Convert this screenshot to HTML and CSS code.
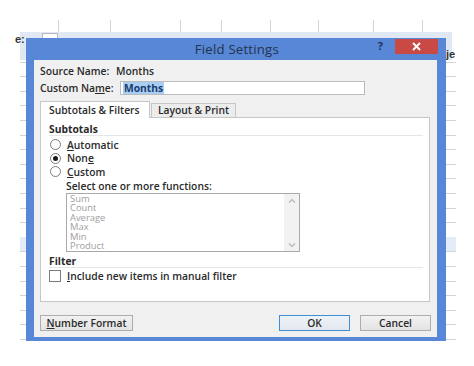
FILE: index.html
```html
<!DOCTYPE html>
<html>
<head>
<meta charset="utf-8">
<link rel="stylesheet" href="styles.css">
</head>
<body>
<div class="sheet">
  <span class="cell-text cell-e">e:</span>
  <span class="cell-box"></span>
  <span class="cell-text cell-je">je</span>

  <div class="dialog">
    <div class="titlebar">
      <span class="title">Field Settings</span>
      <span class="help">?</span>
      <span class="close">
        <svg width="9" height="9" viewBox="0 0 9 9"><path d="M1 1L8 8M8 1L1 8" stroke="#fff" stroke-width="1.8"/></svg>
      </span>
    </div>
    <div class="body">
      <div class="row row-source">
        <span class="label">Source Name:</span>
        <span class="value">Months</span>
      </div>
      <div class="row row-custom">
        <span class="label">Custom Na<u>m</u>e:</span>
        <div class="input"><span class="sel">Months</span></div>
      </div>

      <div class="tabs">
        <div class="tab active">Subtotals &amp; Filters</div>
        <div class="tab">Layout &amp; Print</div>
      </div>
      <div class="panel">
        <div class="section">Subtotals</div>
        <div class="radios">
          <div class="radio-row"><span class="radio"></span><span><u>A</u>utomatic</span></div>
          <div class="radio-row"><span class="radio on"></span><span>Non<u>e</u></span></div>
          <div class="radio-row"><span class="radio"></span><span><u>C</u>ustom</span></div>
        </div>
        <div class="select-label">Select one or more functions:</div>
        <div class="listbox">
          <ul class="items">
            <li>Sum</li>
            <li>Count</li>
            <li>Average</li>
            <li>Max</li>
            <li>Min</li>
            <li>Product</li>
          </ul>
          <div class="scroll">
            <svg width="8" height="5" viewBox="0 0 8 5"><path d="M1 4.5L4 1.5L7 4.5" fill="none" stroke="#b4b4b4" stroke-width="1.1"/></svg>
            <svg width="8" height="5" viewBox="0 0 8 5"><path d="M1 0.5L4 3.5L7 0.5" fill="none" stroke="#b4b4b4" stroke-width="1.1"/></svg>
          </div>
        </div>
        <div class="section section-filter">Filter</div>
        <div class="check-row"><span class="check"></span><span><u>I</u>nclude new items in manual filter</span></div>
      </div>

      <div class="buttons">
        <div class="btn btn-num"><u>N</u>umber Format</div>
        <div class="spacer"></div>
        <div class="btn btn-ok">OK</div>
        <div class="btn btn-cancel">Cancel</div>
      </div>
    </div>
  </div>
</div>
</body>
</html>
```

FILE: styles.css
```css
html, body {
  margin: 0;
  padding: 0;
  background: #fff;
}

.sheet {
  position: relative;
  width: 474px;
  height: 366px;
  overflow: hidden;
  font-family: "Open Sans", "DejaVu Sans", sans-serif;
  font-size: 10.3px;
  font-weight: 600;
  color: #2a2a2a;
  background:
    linear-gradient(#e3ecf8, #e3ecf8) 20px 237px / 436px 14px no-repeat,
    linear-gradient(#e0e8f4, #e0e8f4) 20px 32px / 432px 28px no-repeat,
    linear-gradient(#d4d4d4, #d4d4d4) 58px 20px / 1px 12px no-repeat,
    linear-gradient(#d4d4d4, #d4d4d4) 110px 20px / 1px 12px no-repeat,
    linear-gradient(#d4d4d4, #d4d4d4) 180px 20px / 1px 12px no-repeat,
    linear-gradient(#d4d4d4, #d4d4d4) 221px 20px / 1px 12px no-repeat,
    linear-gradient(#d4d4d4, #d4d4d4) 270px 20px / 1px 12px no-repeat,
    linear-gradient(#d4d4d4, #d4d4d4) 318px 20px / 1px 12px no-repeat,
    linear-gradient(#d4d4d4, #d4d4d4) 373px 20px / 1px 12px no-repeat,
    linear-gradient(#d4d4d4, #d4d4d4) 422px 20px / 1px 12px no-repeat,
    repeating-linear-gradient(to bottom, transparent 0 13.6px, #d4d4d4 13.6px 14.6px) 20px 48px / 7px 300px no-repeat,
    repeating-linear-gradient(to bottom, transparent 0 13.6px, #d4d4d4 13.6px 14.6px) 446px 48px / 10px 300px no-repeat,
    #fff;
}

.cell-text {
  position: absolute;
  font-family: "Liberation Sans", Arial, sans-serif;
  font-weight: bold;
  font-size: 11px;
  color: #333;
}
.cell-e { left: 15px; top: 33px; }
.cell-je { left: 446px; top: 48px; }
.cell-box {
  position: absolute;
  left: 42px;
  top: 33px;
  width: 14px;
  height: 8px;
  background: #fff;
  border: 1px solid #b8b8b8;
}

/* dialog window lying over the sheet */
.dialog {
  position: absolute;
  left: 26px;
  top: 38px;
  width: 420px;
  height: 303px;
  box-sizing: border-box;
  background: #5787d6;
  padding: 0 9px 4px 8px;
  display: flex;
  flex-direction: column;
}

.titlebar {
  height: 22px;
  flex: none;
  display: flex;
  align-items: flex-start;
}
.title {
  flex: 1;
  text-align: center;
  font-size: 13.2px;
  font-weight: 400;
  line-height: 22px;
  color: #25324a;
  padding-left: 62px;
  letter-spacing: 0.2px;
}
.help {
  font-size: 11px;
  font-weight: bold;
  color: #23324e;
  line-height: 14px;
  margin-top: 1px;
  margin-right: 12px;
}
.close {
  width: 43px;
  height: 15px;
  margin-top: 1px;
  margin-right: -1px;
  background: #c94a44;
  display: flex;
  align-items: center;
  justify-content: center;
}

.body {
  flex: 1;
  background: #f0f0f0;
  padding: 4px 6px 0 6px;
  display: flex;
  flex-direction: column;
}

.row {
  display: flex;
  align-items: center;
  height: 14px;
}
.row-custom { margin-top: 3px; }
.label {
  width: 80px;
  flex: none;
  white-space: nowrap;
}
.row-source .label { width: 76px; }

.input {
  width: 241px;
  height: 12px;
  background: #fff;
  border: 1px solid #bcbcbc;
  display: flex;
  align-items: center;
  padding-left: 2px;
}
.sel {
  background: #a8cff3;
  color: #1e3b6e;
  font-weight: bold;
  line-height: 12px;
  padding: 0 1px;
}

.tabs {
  margin-top: 6px;
  display: flex;
  align-items: flex-end;
  height: 16px;
  position: relative;
  z-index: 1;
}
.tab {
  box-sizing: border-box;
  height: 14px;
  border: 1px solid #c6c6c6;
  border-bottom: none;
  background: #ececec;
  line-height: 13px;
  white-space: nowrap;
}
.tab.active {
  height: 17px;
  width: 110px;
  background: #fff;
  padding: 0 0 0 8px;
  line-height: 17px;
  margin-bottom: -1px;
}
.tab:not(.active) {
  width: 85px;
  margin-left: 1px;
  text-align: center;
}

.panel {
  height: 185px;
  width: 390px;
  box-sizing: border-box;
  background: #fff;
  border: 1px solid #c6c6c6;
  padding: 5px 6px 0 8px;
  display: flex;
  flex-direction: column;
}

.section {
  font-weight: 700;
  line-height: 11px;
  padding-top: 1px;
  padding-bottom: 0;
  border-bottom: 1px solid #e6e6e6;
}
.section-filter { margin-top: 2.5px; }

.radios {
  margin-top: 2px;
}
.radio-row, .check-row {
  display: flex;
  align-items: center;
  height: 13.5px;
  white-space: nowrap;
}
.radio {
  width: 9px;
  height: 9px;
  border: 1px solid #7c7c7c;
  border-radius: 50%;
  background: #fff;
  margin: 0 6px 0 1px;
  position: relative;
  box-sizing: content-box;
}
.radio.on::after {
  content: "";
  position: absolute;
  left: 2px;
  top: 2px;
  width: 5px;
  height: 5px;
  border-radius: 50%;
  background: #1a1a1a;
}

.select-label {
  margin-left: 17px;
  line-height: 13px;
  margin-top: 1px;
}

.listbox {
  margin-left: 17px;
  margin-top: 0.5px;
  width: 234px;
  height: 59px;
  box-sizing: border-box;
  border: 1px solid #a9a9a9;
  display: flex;
  overflow: hidden;
}
.items {
  list-style: none;
  margin: 0;
  padding: 0 0 0 3px;
  flex: 1;
  color: #a0a0a0;
  font-weight: 500;
  line-height: 9.4px;
  font-size: 9.4px;
}
.scroll {
  width: 15px;
  background: #f2f2f2;
  display: flex;
  flex-direction: column;
  align-items: center;
  justify-content: space-between;
  padding: 4px 0 3px;
}

.check-row { margin-top: 2px; }
.check {
  width: 10px;
  height: 10px;
  border: 1px solid #7c7c7c;
  background: #fff;
  margin-right: 6px;
}

.buttons {
  margin-top: 13px;
  display: flex;
  height: 16px;
  width: 391px;
}
.spacer { flex: 1; }
.btn {
  box-sizing: border-box;
  height: 16px;
  border: 1px solid #adadad;
  background: linear-gradient(#f2f2f2, #e3e3e3);
  line-height: 14px;
  text-align: center;
  white-space: nowrap;
}
.btn-num { width: 93px; }
.btn-ok {
  width: 71px;
  border-color: #3d8fd6;
  background: linear-gradient(#eef3f8, #e2e8ee);
}
.btn-cancel {
  width: 71px;
  margin-left: 10px;
}
```
